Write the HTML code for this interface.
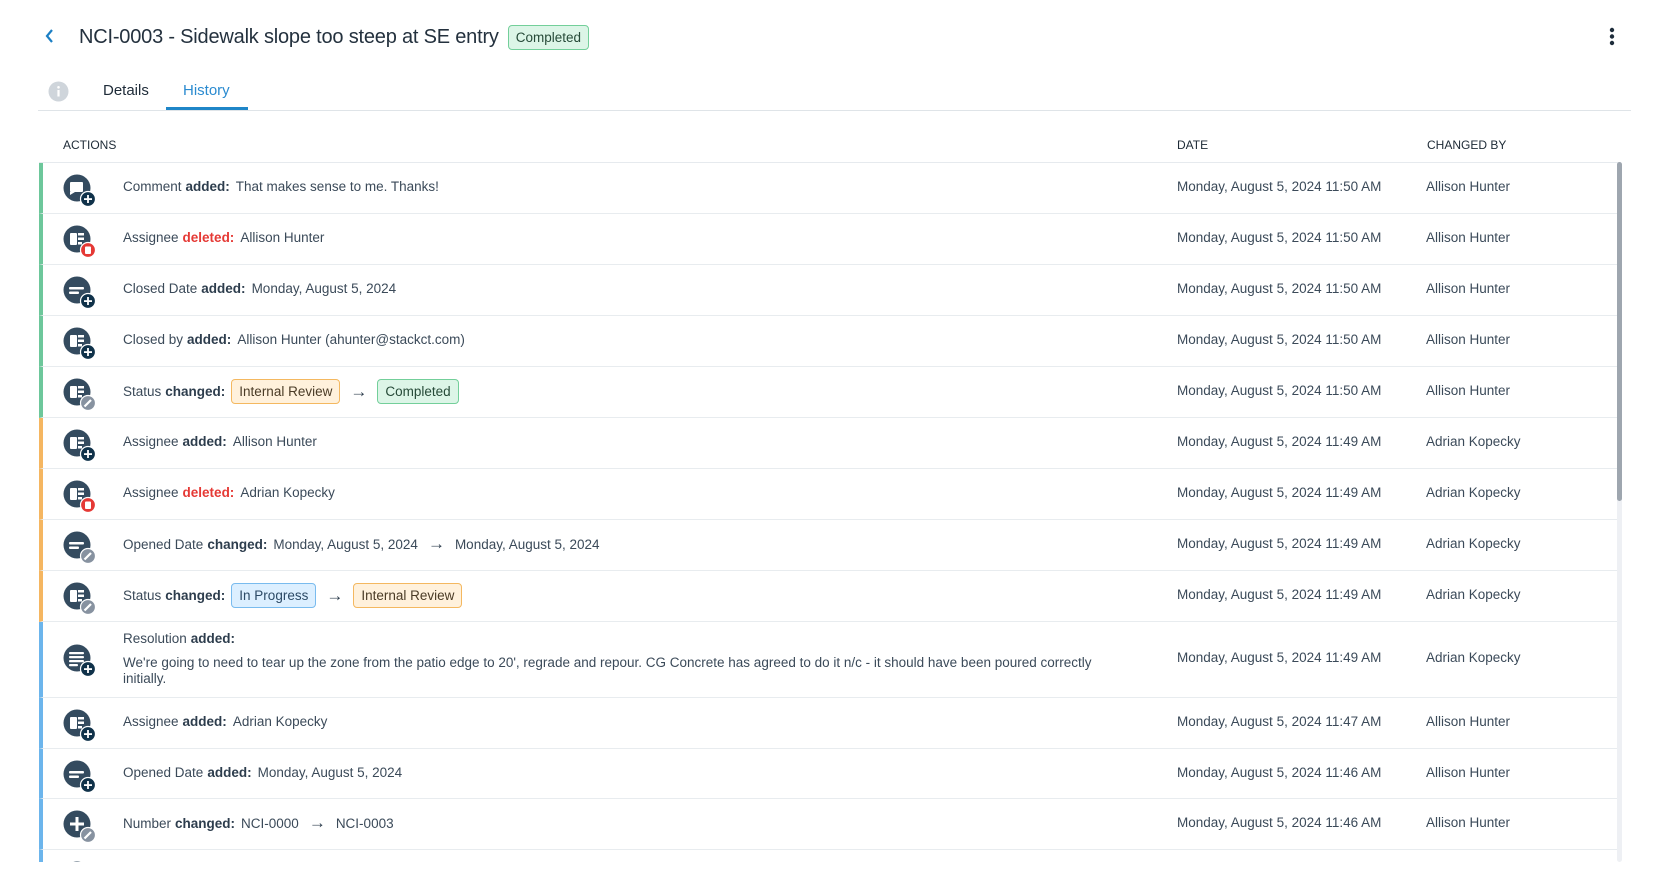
<!DOCTYPE html>
<html><head><meta charset="utf-8"><style>
*{box-sizing:border-box;margin:0;padding:0}
body{width:1663px;height:885px;background:#fff;font-family:"Liberation Sans",sans-serif;color:#2b3b4c;position:relative;overflow:hidden}
.abs{position:absolute}
.title{left:79px;top:25px;font-size:20px;letter-spacing:-0.2px;color:#24313e;white-space:nowrap;display:flex;align-items:center}
.badge{display:inline-block;border:1px solid;border-radius:4px;padding:0 7px;font-size:13.5px;line-height:23px;white-space:nowrap;letter-spacing:0}
.g{background:#dcf5e7;border-color:#73cf9a;color:#264a38}
.o{background:#fff1dc;border-color:#f4b860;color:#4a3b26}
.b{background:#dcefff;border-color:#79bbee;color:#2c4a66}
.gr{background:#eef1f4;border-color:#b8c2cc}
.tab{font-size:15px;top:82px}
.hdr{font-size:12px;top:138px;color:#1d2a36}
#tbl{position:absolute;left:39px;top:162px;width:1579px;height:700px;overflow:hidden;border-top:1px solid #e6eaee}
.row{position:absolute;left:0;width:1579px;border-bottom:1px solid #e8ecef;border-left:4px solid}
.gb{border-left-color:#6dc79b}.ob{border-left-color:#f5b661}.bb{border-left-color:#6cb5ec}
.ic{position:absolute;left:20px;width:32px;height:32px}
.txt{position:absolute;left:80px;font-size:13.5px;color:#3b4a59;white-space:nowrap;display:flex;align-items:center}
.txt b{color:#2d3d4d;margin-left:4px;margin-right:6px}
.txt b.del{color:#e53935}
.arr{margin:0 10px;font-size:17px;color:#2d3d4d}
.dt{position:absolute;left:1134px;font-size:13.5px;color:#3b4a59;white-space:nowrap}
.by{position:absolute;left:1383px;font-size:13.5px;color:#3b4a59;white-space:nowrap}
</style></head><body>
<svg class="abs" style="left:44px;top:28px" width="12" height="16" viewBox="0 0 12 16"><path d="M8 2 L3 8 L8 14" fill="none" stroke="#1c7fc4" stroke-width="2.2"/></svg>
<div class="abs title">NCI-0003 - Sidewalk slope too steep at SE entry<span class="badge g" style="margin-left:9px">Completed</span></div>
<svg class="abs" style="left:1608px;top:27px" width="8" height="20"><circle cx="4" cy="3" r="2.2" fill="#1e2d3b"/><circle cx="4" cy="9.5" r="2.2" fill="#1e2d3b"/><circle cx="4" cy="16" r="2.2" fill="#1e2d3b"/></svg>
<svg class="abs" style="left:48px;top:81px" width="21" height="21"><circle cx="10.5" cy="10.5" r="10" fill="#cfd5db"/><rect x="9.4" y="9" width="2.2" height="6.5" fill="#fff"/><circle cx="10.5" cy="6.3" r="1.3" fill="#fff"/></svg>
<div class="abs tab" style="left:103px;color:#1e2b38">Details</div>
<div class="abs tab" style="left:183px;color:#2b8bd0">History</div>
<div class="abs" style="left:38px;top:110px;width:1593px;height:1px;background:#dfe4e8"></div>
<div class="abs" style="left:166px;top:107px;width:82px;height:3px;background:#1f86c8"></div>
<div class="abs hdr" style="left:63px">ACTIONS</div>
<div class="abs hdr" style="left:1177px">DATE</div>
<div class="abs hdr" style="left:1427px">CHANGED BY</div>
<svg width="0" height="0" style="position:absolute">
<defs>
<g id="base"><circle cx="14" cy="14" r="13.5" fill="#344b5f"/></g>
<g id="doc"><rect x="7" y="8" width="7" height="12" rx="1" fill="#fff"/><rect x="15" y="8" width="6" height="2.5" fill="#fff"/><rect x="15" y="12.5" width="6" height="2.5" fill="#fff"/><rect x="15" y="17" width="4" height="2.5" fill="#fff"/></g>
<g id="lines"><rect x="6" y="11" width="15" height="2.5" rx="1" fill="#fff"/><rect x="6" y="15.5" width="10" height="2.5" rx="1" fill="#fff"/></g>
<g id="lines4"><rect x="6" y="8" width="15" height="2.3" rx="1" fill="#fff"/><rect x="6" y="12" width="15" height="2.3" rx="1" fill="#fff"/><rect x="6" y="16" width="15" height="2.3" rx="1" fill="#fff"/><rect x="6" y="20" width="9" height="2.3" rx="1" fill="#fff"/></g>
<g id="cmt"><rect x="7" y="8" width="13" height="10" rx="1" fill="#fff"/><path d="M7 18 h5 l-5 3z" fill="#fff"/></g>
<g id="plus"><rect x="7" y="12.5" width="14" height="3" fill="#fff"/><rect x="12.5" y="7" width="3" height="14" fill="#fff"/></g>
<g id="badd"><circle cx="25" cy="25" r="7.5" fill="#10324a" stroke="#fff" stroke-width="1.2"/><rect x="21" y="24.2" width="8" height="1.8" fill="#fff"/><rect x="24.1" y="21" width="1.8" height="8" fill="#fff"/></g>
<g id="bdel"><circle cx="25" cy="25" r="7.5" fill="#e53935" stroke="#fff" stroke-width="1.2"/><rect x="22" y="21.5" width="6" height="7.5" rx="1" fill="#fff"/></g>
<g id="bed"><circle cx="25" cy="25" r="7.5" fill="#8792a0" stroke="#fff" stroke-width="1.2"/><path d="M21.5 28.5 L28 22" stroke="#fff" stroke-width="2.2"/></g>
</defs></svg>
<div id="tbl">
<div class="row gb" style="top:0;height:51px"><svg class="ic" style="top:11px"><use href="#base"/><use href="#cmt"/><use href="#badd"/></svg><div class="txt" style="top:16px">Comment<b>added:</b> That makes sense to me. Thanks!</div><div class="dt" style="top:16px">Monday, August 5, 2024 11:50 AM</div><div class="by" style="top:16px">Allison Hunter</div></div>
<div class="row gb" style="top:51px;height:51px"><svg class="ic" style="top:11px"><use href="#base"/><use href="#doc"/><use href="#bdel"/></svg><div class="txt" style="top:16px">Assignee<b class="del">deleted:</b> Allison Hunter</div><div class="dt" style="top:16px">Monday, August 5, 2024 11:50 AM</div><div class="by" style="top:16px">Allison Hunter</div></div>
<div class="row gb" style="top:102px;height:51px"><svg class="ic" style="top:11px"><use href="#base"/><use href="#lines"/><use href="#badd"/></svg><div class="txt" style="top:16px">Closed Date<b>added:</b> Monday, August 5, 2024</div><div class="dt" style="top:16px">Monday, August 5, 2024 11:50 AM</div><div class="by" style="top:16px">Allison Hunter</div></div>
<div class="row gb" style="top:153px;height:51px"><svg class="ic" style="top:11px"><use href="#base"/><use href="#doc"/><use href="#badd"/></svg><div class="txt" style="top:16px">Closed by<b>added:</b> Allison Hunter (ahunter@stackct.com)</div><div class="dt" style="top:16px">Monday, August 5, 2024 11:50 AM</div><div class="by" style="top:16px">Allison Hunter</div></div>
<div class="row gb" style="top:204px;height:51px"><svg class="ic" style="top:11px"><use href="#base"/><use href="#doc"/><use href="#bed"/></svg><div class="txt" style="top:12px">Status<b>changed:</b><span class="badge o">Internal Review</span><span class="arr">→</span><span class="badge g">Completed</span></div><div class="dt" style="top:16px">Monday, August 5, 2024 11:50 AM</div><div class="by" style="top:16px">Allison Hunter</div></div>
<div class="row ob" style="top:255px;height:51px"><svg class="ic" style="top:11px"><use href="#base"/><use href="#doc"/><use href="#badd"/></svg><div class="txt" style="top:16px">Assignee<b>added:</b> Allison Hunter</div><div class="dt" style="top:16px">Monday, August 5, 2024 11:49 AM</div><div class="by" style="top:16px">Adrian Kopecky</div></div>
<div class="row ob" style="top:306px;height:51px"><svg class="ic" style="top:11px"><use href="#base"/><use href="#doc"/><use href="#bdel"/></svg><div class="txt" style="top:16px">Assignee<b class="del">deleted:</b> Adrian Kopecky</div><div class="dt" style="top:16px">Monday, August 5, 2024 11:49 AM</div><div class="by" style="top:16px">Adrian Kopecky</div></div>
<div class="row ob" style="top:357px;height:51px"><svg class="ic" style="top:11px"><use href="#base"/><use href="#lines"/><use href="#bed"/></svg><div class="txt" style="top:14px">Opened Date<b>changed:</b> Monday, August 5, 2024<span class="arr">→</span>Monday, August 5, 2024</div><div class="dt" style="top:16px">Monday, August 5, 2024 11:49 AM</div><div class="by" style="top:16px">Adrian Kopecky</div></div>
<div class="row ob" style="top:408px;height:51px"><svg class="ic" style="top:11px"><use href="#base"/><use href="#doc"/><use href="#bed"/></svg><div class="txt" style="top:12px">Status<b>changed:</b><span class="badge b">In Progress</span><span class="arr">→</span><span class="badge o">Internal Review</span></div><div class="dt" style="top:16px">Monday, August 5, 2024 11:49 AM</div><div class="by" style="top:16px">Adrian Kopecky</div></div>
<div class="row bb" style="top:459px;height:76px"><svg class="ic" style="top:22px"><use href="#base"/><use href="#lines4"/><use href="#badd"/></svg><div class="txt" style="top:9px">Resolution<b>added:</b></div><div class="txt" style="top:33px;white-space:normal;display:block;width:990px;line-height:16px">We're going to need to tear up the zone from the patio edge to 20', regrade and repour. CG Concrete has agreed to do it n/c - it should have been poured correctly initially.</div><div class="dt" style="top:28px">Monday, August 5, 2024 11:49 AM</div><div class="by" style="top:28px">Adrian Kopecky</div></div>
<div class="row bb" style="top:535px;height:51px"><svg class="ic" style="top:11px"><use href="#base"/><use href="#doc"/><use href="#badd"/></svg><div class="txt" style="top:16px">Assignee<b>added:</b> Adrian Kopecky</div><div class="dt" style="top:16px">Monday, August 5, 2024 11:47 AM</div><div class="by" style="top:16px">Allison Hunter</div></div>
<div class="row bb" style="top:586px;height:50px"><svg class="ic" style="top:11px"><use href="#base"/><use href="#lines"/><use href="#badd"/></svg><div class="txt" style="top:16px">Opened Date<b>added:</b> Monday, August 5, 2024</div><div class="dt" style="top:16px">Monday, August 5, 2024 11:46 AM</div><div class="by" style="top:16px">Allison Hunter</div></div>
<div class="row bb" style="top:636px;height:51px"><svg class="ic" style="top:11px"><use href="#base"/><use href="#plus"/><use href="#bed"/></svg><div class="txt" style="top:14px">Number<b>changed:</b> NCI-0000<span class="arr">→</span>NCI-0003</div><div class="dt" style="top:16px">Monday, August 5, 2024 11:46 AM</div><div class="by" style="top:16px">Allison Hunter</div></div>
<div class="row bb" style="top:687px;height:51px"><svg class="ic" style="top:11px"><use href="#base"/></svg><div class="abs badge gr" style="left:190px;top:12px;width:86px;height:25px"></div><div class="abs badge b" style="left:316px;top:12px;width:86px;height:25px"></div></div>
</div>
<div class="abs" style="left:1617px;top:162px;width:5px;height:700px;background:#eef0f4;border-radius:3px"></div>
<div class="abs" style="left:1617px;top:162px;width:5px;height:339px;background:#9ea6af;border-radius:3px"></div>
</body></html>
